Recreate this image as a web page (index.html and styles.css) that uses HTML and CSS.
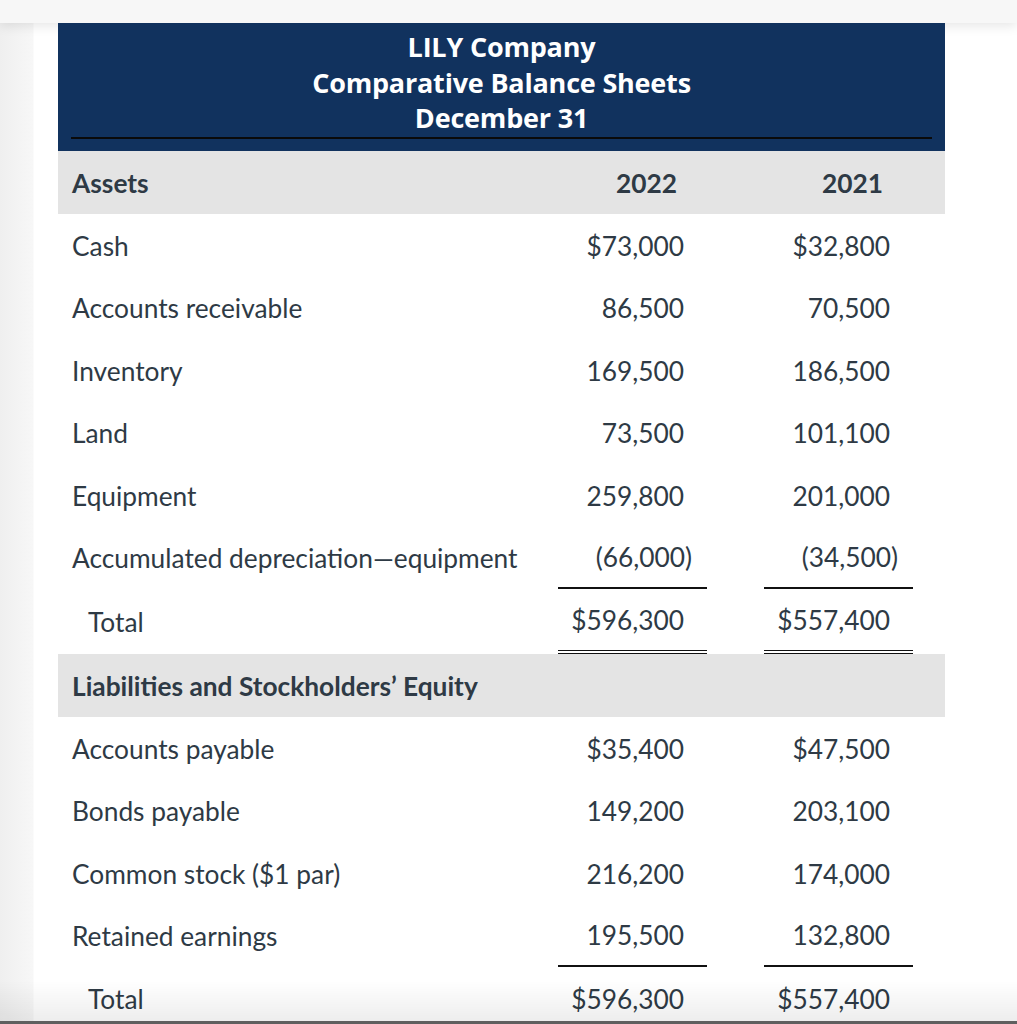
FILE: index.html
```html
<!DOCTYPE html>
<html>
<head>
<meta charset="utf-8">
<link rel="stylesheet" href="styles.css">
</head>
<body>
<div class="topbar"></div>
<main class="sheet">
  <header class="title">
    <div class="title-line">LILY Company</div>
    <div class="title-line">Comparative Balance Sheets</div>
    <div class="title-line">December 31</div>
    <div class="title-rule"></div>
  </header>
  <div class="table">
    <div class="row band"><div class="label bold">Assets</div><div class="num head">2022</div><div class="num head">2021</div></div>
    <div class="row"><div class="label">Cash</div><div class="num"><span class="pos">$73,000</span></div><div class="num"><span class="pos">$32,800</span></div></div>
    <div class="row"><div class="label">Accounts receivable</div><div class="num"><span class="pos">86,500</span></div><div class="num"><span class="pos">70,500</span></div></div>
    <div class="row"><div class="label">Inventory</div><div class="num"><span class="pos">169,500</span></div><div class="num"><span class="pos">186,500</span></div></div>
    <div class="row"><div class="label">Land</div><div class="num"><span class="pos">73,500</span></div><div class="num"><span class="pos">101,100</span></div></div>
    <div class="row"><div class="label">Equipment</div><div class="num"><span class="pos">259,800</span></div><div class="num"><span class="pos">201,000</span></div></div>
    <div class="row"><div class="label">Accumulated depreciation—equipment</div><div class="num single"><span>(66,000)</span></div><div class="num single"><span>(34,500)</span></div></div>
    <div class="row total"><div class="label indent">Total</div><div class="num double"><span class="pos">$596,300</span></div><div class="num double"><span class="pos">$557,400</span></div></div>
    <div class="row band"><div class="label bold">Liabilities and Stockholders’ Equity</div><div class="num"></div><div class="num"></div></div>
    <div class="row"><div class="label">Accounts payable</div><div class="num"><span class="pos">$35,400</span></div><div class="num"><span class="pos">$47,500</span></div></div>
    <div class="row"><div class="label">Bonds payable</div><div class="num"><span class="pos">149,200</span></div><div class="num"><span class="pos">203,100</span></div></div>
    <div class="row"><div class="label">Common stock ($1 par)</div><div class="num"><span class="pos">216,200</span></div><div class="num"><span class="pos">174,000</span></div></div>
    <div class="row"><div class="label">Retained earnings</div><div class="num single"><span class="pos">195,500</span></div><div class="num single"><span class="pos">132,800</span></div></div>
    <div class="row"><div class="label indent">Total</div><div class="num"><span class="pos">$596,300</span></div><div class="num"><span class="pos">$557,400</span></div></div>
  </div>
</main>
<div class="bottom-fade"></div>
</body>
</html>
```
FILE: styles.css
```css
html, body {
  margin: 0;
  padding: 0;
}
body {
  background: linear-gradient(to right, #efefef 0, #f7f7f7 33px, #ffffff 34px);
  font-family: Lato, "Liberation Sans", sans-serif;
  color: #2e3a45;
  height: 1024px;
  overflow: hidden;
}
.topbar {
  height: 23px;
  background: #f7f7f7;
  box-shadow: 0 3px 12px rgba(0, 0, 0, 0.10);
  position: relative;
  z-index: 0;
}
.sheet {
  width: 887px;
  margin-left: 58px;
  position: relative;
  z-index: 1;
  background: #fff;
}
.title {
  background: #11325e;
  color: #ffffff;
  font-family: "Open Sans", "DejaVu Sans", sans-serif;
  font-weight: 700;
  font-size: 27px;
  line-height: 35.5px;
  text-align: center;
  padding-top: 6px;
  height: 128px;
  box-sizing: border-box;
  display: flex;
  flex-direction: column;
}
.title-line {
  height: 35.5px;
  letter-spacing: -0.2px;
}
.title-rule {
  margin: 1px 13px 0;
  height: 2px;
  background: #0a0a0a;
}
.table {
  display: flex;
  flex-direction: column;
}
.row {
  display: grid;
  grid-template-columns: 500px 149px 57px 149px;
  height: 62.5px;
  align-items: stretch;
  font-size: 26.3px;
}
.row.total {
  height: 65.5px;
}
.row > .num:last-child {
  grid-column: 4;
}
.row.band {
  background: #e4e4e4;
}
.label {
  padding-left: 14px;
  padding-top: 2px;
  display: flex;
  align-items: center;
  white-space: nowrap;
}
.label.indent {
  padding-left: 30px;
}
.bold {
  font-weight: 700;
}
.num {
  display: flex;
  align-items: center;
  justify-content: flex-end;
  padding-right: 15px;
  padding-top: 2px;
  box-sizing: border-box;
}
.num .pos {
  padding-right: 8px;
}
.num.head {
  font-weight: 700;
  padding-right: 30px;
}
.num.single {
  border-bottom: 2px solid #111;
}
.num.double {
  border-bottom: 4px double #111;
}
.bottom-fade {
  position: fixed;
  left: 0;
  right: 0;
  bottom: 0;
  height: 40px;
  background: linear-gradient(to bottom, rgba(0,0,0,0) 0, rgba(0,0,0,0.07) 100%);
  border-bottom: 3px solid #5f5f5f;
  z-index: 5;
}
```
